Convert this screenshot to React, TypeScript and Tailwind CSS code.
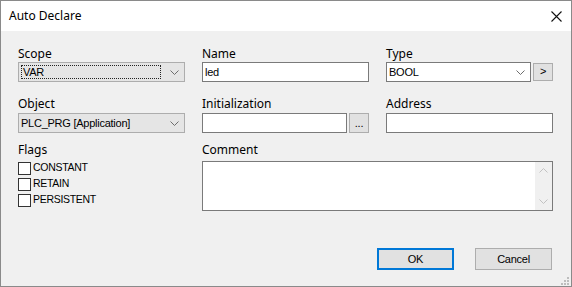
import React from "react"

const label = "block h-4 leading-4 text-[12px] text-black"
const ctl = "font-['Liberation_Sans',Arial,sans-serif] text-[11px] tracking-[-0.25px] text-black"

function Chevron() {
  return (
    <svg width="9" height="5" viewBox="0 0 9 5" className="shrink-0">
      <path d="M0.5 0.5 L4.5 4.5 L8.5 0.5" fill="none" stroke="#6d6d6d" strokeWidth="1" />
    </svg>
  )
}

function SmallArrow({ up }: { up?: boolean }) {
  return (
    <svg width="9" height="5" viewBox="0 0 9 5">
      <path
        d={up ? "M0.5 4.5 L4.5 0.5 L8.5 4.5" : "M0.5 0.5 L4.5 4.5 L8.5 0.5"}
        fill="none"
        stroke="#c2c2c2"
        strokeWidth="1"
      />
    </svg>
  )
}

function Check({ text }: { text: string }) {
  return (
    <div className="flex h-4 items-center">
      <div className="h-[13px] w-[13px] border border-[#333] bg-white" />
      <span className="ml-[2px] font-['Liberation_Sans',Arial,sans-serif] text-[10.5px] tracking-[-0.3px] text-black">
        {text}
      </span>
    </div>
  )
}

export default function App() {
  return (
    <div className="flex h-[287px] w-[572px] flex-col border border-[#8a8a8a] bg-[#f0f0f0] font-['Noto_Sans','Open_Sans',sans-serif]">
      {/* title bar */}
      <div className="flex h-[30px] items-center justify-between bg-white pl-2 pr-[9px]">
        <span className="text-[12px] text-black">Auto Declare</span>
        <svg width="11" height="11" viewBox="0 0 11 11">
          <path d="M0.5 0.5 L10.5 10.5 M10.5 0.5 L0.5 10.5" stroke="#111" strokeWidth="1.1" />
        </svg>
      </div>

      <div className="flex flex-1 flex-col pl-[17px] pt-[15px]">
        {/* row 1 */}
        <div className="flex gap-[17px]">
          <div className="w-[167px]">
            <span className={label}>Scope</span>
            <div className="flex h-5 items-center border border-[#adadad] bg-[#e5e5e5] pl-[2px] pr-[5px]">
              <div className="flex h-[14px] flex-1 items-center border border-dotted border-[#222] pl-px">
                <span className={ctl}>VAR</span>
              </div>
              <div className="ml-[9px]">
                <Chevron />
              </div>
            </div>
          </div>
          <div className="w-[167px]">
            <span className={label}>Name</span>
            <div className="flex h-5 items-center border border-[#7a7a7a] bg-white pl-[2px]">
              <span className={ctl}>led</span>
            </div>
          </div>
          <div className="flex w-[167px] flex-col">
            <span className={label}>Type</span>
            <div className="flex gap-[2px]">
              <div className="flex h-5 flex-1 items-center justify-between border border-[#7a7a7a] bg-white pl-[2px] pr-[5px]">
                <span className={ctl}>BOOL</span>
                <Chevron />
              </div>
              <div className="mt-px flex h-[18px] w-[20px] items-center justify-center border border-[#adadad] bg-[#e1e1e1] pb-px">
                <span className={ctl}>&gt;</span>
              </div>
            </div>
          </div>
        </div>

        {/* row 2 */}
        <div className="mt-[14px] flex gap-[17px]">
          <div className="w-[167px]">
            <span className={label}>Object</span>
            <div className="mt-px flex h-5 items-center justify-between border border-[#adadad] bg-[#e5e5e5] pl-[2px] pr-[5px]">
              <span className={ctl}>PLC_PRG [Application]</span>
              <Chevron />
            </div>
          </div>
          <div className="w-[167px]">
            <span className={label}>Initialization</span>
            <div className="mt-px flex gap-[2px]">
              <div className="h-5 flex-1 border border-[#7a7a7a] bg-white" />
              <div className="flex h-5 w-[20px] items-center justify-center border border-[#adadad] bg-[#e1e1e1]">
                <span className={ctl}>...</span>
              </div>
            </div>
          </div>
          <div className="w-[167px]">
            <span className={label}>Address</span>
            <div className="mt-px h-5 border border-[#7a7a7a] bg-white" />
          </div>
        </div>

        {/* row 3 */}
        <div className="mt-[9px] flex gap-[17px]">
          <div className="w-[167px]">
            <span className={label}>Flags</span>
            <div className="mt-[2px] flex flex-col">
              <Check text="CONSTANT" />
              <Check text="RETAIN" />
              <Check text="PERSISTENT" />
            </div>
          </div>
          <div className="w-[351px]">
            <span className={label}>Comment</span>
            <div className="mt-[3px] flex h-[50px] border border-[#7a7a7a] bg-white">
              <div className="flex-1" />
              <div className="flex w-[17px] flex-col items-center justify-between bg-[#f0f0f0] py-[6px]">
                <SmallArrow up />
                <SmallArrow />
              </div>
            </div>
          </div>
        </div>

        {/* buttons */}
        <div className="mt-[37px] flex justify-end gap-[21px] pr-[19px]">
          <div className="flex h-[22px] w-[77px] items-center justify-center border-2 border-[#0078d7] bg-[#e1e1e1]">
            <span className={ctl}>OK</span>
          </div>
          <div className="flex h-[22px] w-[77px] items-center justify-center border border-[#adadad] bg-[#e1e1e1]">
            <span className={ctl}>Cancel</span>
          </div>
        </div>

        <div className="mt-auto flex justify-end pb-px pr-[2px]">
          <svg width="8" height="8" viewBox="0 0 8 8">
            <g fill="#bdbdbd">
              <rect x="6" y="0" width="2" height="2" />
              <rect x="3" y="3" width="2" height="2" />
              <rect x="6" y="3" width="2" height="2" />
              <rect x="0" y="6" width="2" height="2" />
              <rect x="3" y="6" width="2" height="2" />
              <rect x="6" y="6" width="2" height="2" />
            </g>
          </svg>
        </div>
      </div>
    </div>
  )
}
